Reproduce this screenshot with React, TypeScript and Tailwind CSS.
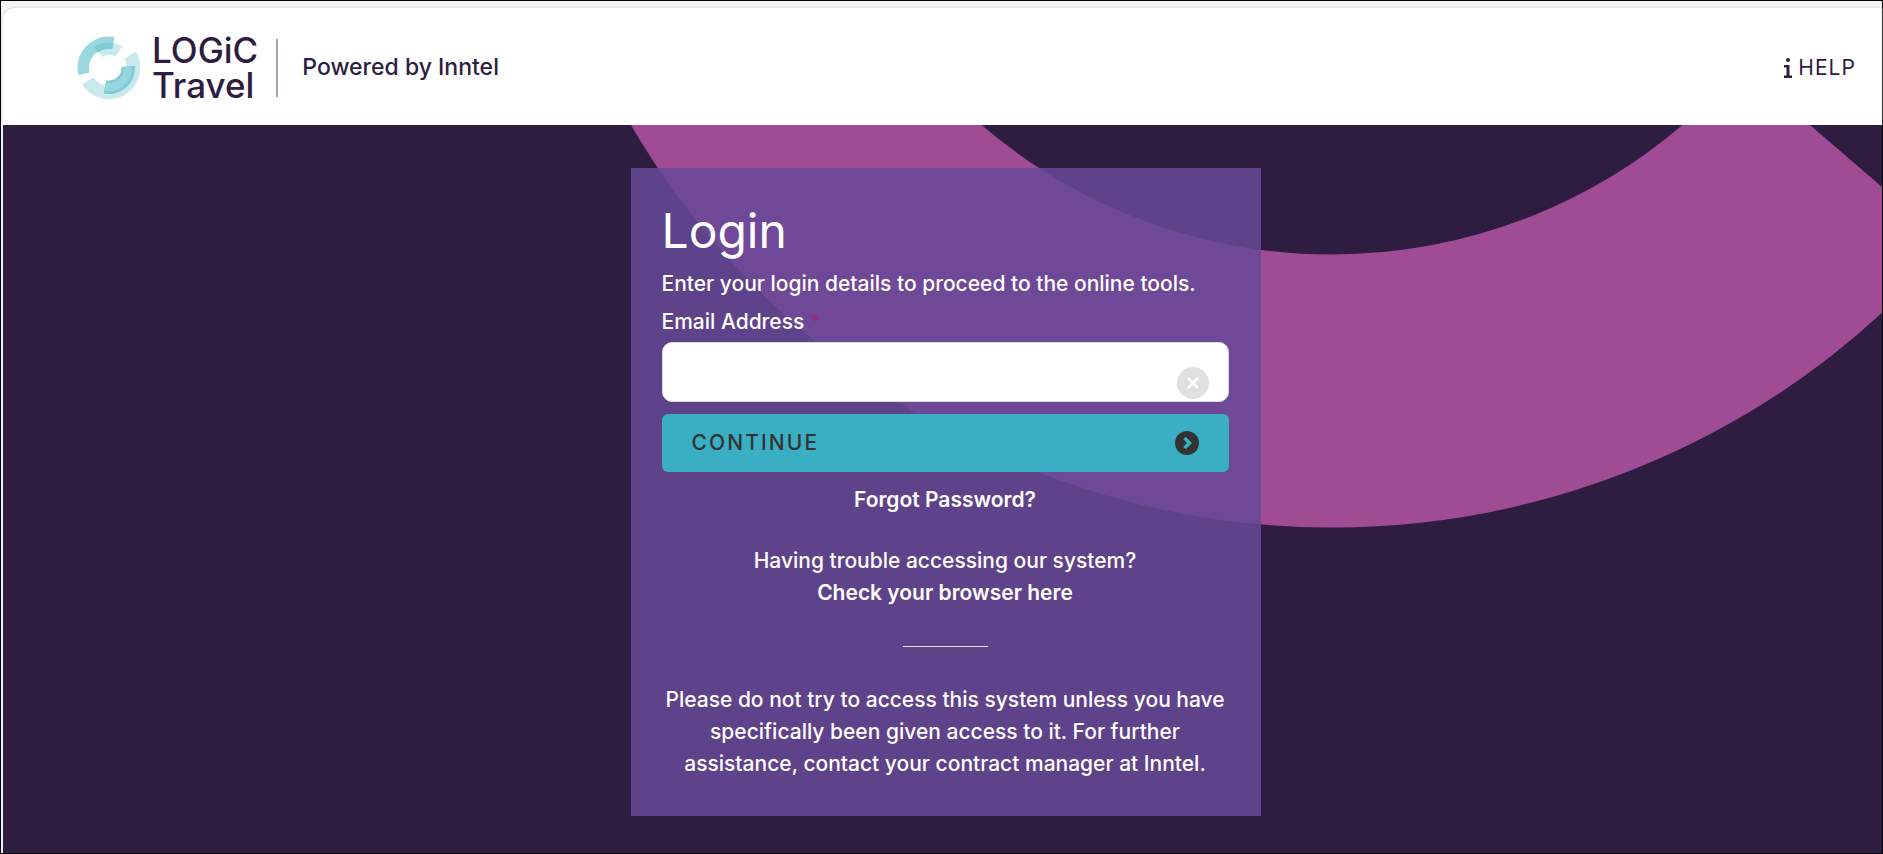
import { useState } from 'react';

const ringPath = (r1: number, r2: number, a1: number, a2: number) => {
  const p = (r: number, a: number) => {
    const t = (a * Math.PI) / 180;
    return `${(r * Math.cos(t)).toFixed(2)} ${(r * Math.sin(t)).toFixed(2)}`;
  };
  const large = a2 - a1 > 180 ? 1 : 0;
  return `M${p(r2, a1)}A${r2} ${r2} 0 ${large} 1 ${p(r2, a2)}L${p(r1, a2)}A${r1} ${r1} 0 ${large} 0 ${p(r1, a1)}Z`;
};

function LogoMark() {
  return (
    <svg viewBox="-32 -32 64 64" className="size-16 shrink-0" aria-hidden="true">
      <path d={ringPath(18, 31.5, -31, 149)} fill="#c9eaed" />
      <path d={ringPath(13, 25.500, -122, -59)} fill="#c9eaed" />
      <path d={ringPath(20, 31.5, 167, 280)} fill="#9bd7df" />
      <path d={ringPath(19, 25.500, 234, 280)} fill="#80cbd6" />
      <path d={ringPath(12.500, 26, -5, 102)} fill="#80cbd6" />
      <path d={ringPath(15, 23, -5, 102)} fill="#96d6df" />
    </svg>
  );
}

function Header() {
  return (
    <header className="flex h-[117px] items-center justify-between rounded-tl-xl bg-white pt-0.5 pr-[26px] pl-[74px] text-[#2e1d41] shadow-[0_0_2px_#bbb]">
      <a href="#" className="flex items-center">
        <LogoMark />
        <span className="ml-[11px] text-[35px] leading-[35px] font-medium">
          <span className="block">LOGiC</span>
          <span className="block">Travel</span>
        </span>
        <span className="ml-[18px] h-[58px] w-0.5 bg-[#a9a1b3]" />
        <span className="ml-6 text-[23px] font-medium">Powered by Inntel</span>
      </a>
      <a href="#" className="flex items-center gap-1.5 text-[21px]">
        <svg viewBox="0 0 8 20" className="h-5 w-2" fill="currentColor" aria-hidden="true">
          <circle cx="4" cy="2" r="2" />
          <path d="M0 7h5.500v10.500H8V20H0v-2.500h2.500v-8H0Z" />
        </svg>
        <span className="tracking-wider">HELP</span>
      </a>
    </header>
  );
}

function Backdrop() {
  return (
    <svg
      className="absolute inset-0 size-full"
      viewBox="0 0 1879 728"
      preserveAspectRatio="xMidYMin slice"
      aria-hidden="true"
    >
      <circle cx="1329" cy="-409" r="675" fill="none" stroke="#9f4c95" strokeWidth="273" />
      <path d="M1807 0L1879 62V0Z" fill="#2e1d41" />
    </svg>
  );
}

function LoginCard() {
  const [email, setEmail] = useState('');
  return (
    <form
      className="relative w-[630px] max-w-full bg-[#664998]/85 pt-8 pr-8 pb-9 pl-[31px] text-[21px] leading-8 font-medium text-white"
      onSubmit={(e) => e.preventDefault()}
    >
      <h1 className="text-5xl leading-[62px] font-normal">Login</h1>
      <p className="mt-1.5">Enter your login details to proceed to the online tools.</p>
      <label htmlFor="email" className="mt-1.5 block">
        Email Address <span className="text-[#962d82]">*</span>
      </label>
      <div className="relative mt-1">
        <input
          id="email"
          type="email"
          value={email}
          onChange={(e) => setEmail(e.target.value)}
          className="block h-[60px] w-full rounded-[10px] border border-[#dcdcdc] bg-white px-5 text-[#333] outline-none"
        />
        <button
          type="button"
          aria-label="Clear"
          onClick={() => setEmail('')}
          className="absolute right-5 bottom-[3px] flex size-8 items-center justify-center rounded-full bg-[#e0e0e0]"
        >
          <svg viewBox="0 0 12 12" className="size-3" stroke="#fff" strokeWidth="2.500" aria-hidden="true">
            <path d="M1 1l10 10M11 1L1 11" />
          </svg>
        </button>
      </div>
      <button
        type="submit"
        className="mt-3 flex h-[58px] w-full items-center justify-between rounded-md bg-[#3aaec2] px-[30px] text-[#333]"
      >
        <span className="tracking-widest">CONTINUE</span>
        <svg viewBox="0 0 24 24" className="size-6" aria-hidden="true">
          <circle cx="12" cy="12" r="12" fill="#333" />
          <path d="M9.500 7l5 5-5 5" fill="none" stroke="#3aaec2" strokeWidth="3.500" />
        </svg>
      </button>
      <div className="text-center">
        <a href="#" className="mt-3 block font-semibold">
          Forgot Password?
        </a>
        <p className="mt-[29px]">Having trouble accessing our system?</p>
        <a href="#" className="block font-semibold">
          Check your browser here
        </a>
        <hr className="mx-auto my-[37px] w-[85px] border-[#dde5dd]" />
        <p>
          Please do not try to access this system unless you have specifically been given access to it. For further
          assistance, contact your contract manager at Inntel.
        </p>
      </div>
    </form>
  );
}

export default function App() {
  return (
    <div className="flex min-h-screen flex-col border border-black bg-[#f5f3f4] pt-[7px] pl-0.5 font-['Inter','Open_Sans',sans-serif]">
      <Header />
      <main className="relative flex grow items-start justify-center overflow-hidden bg-[#2e1d41] pt-[43px] pr-4 pb-9 pl-[22px]">
        <Backdrop />
        <LoginCard />
      </main>
    </div>
  );
}
